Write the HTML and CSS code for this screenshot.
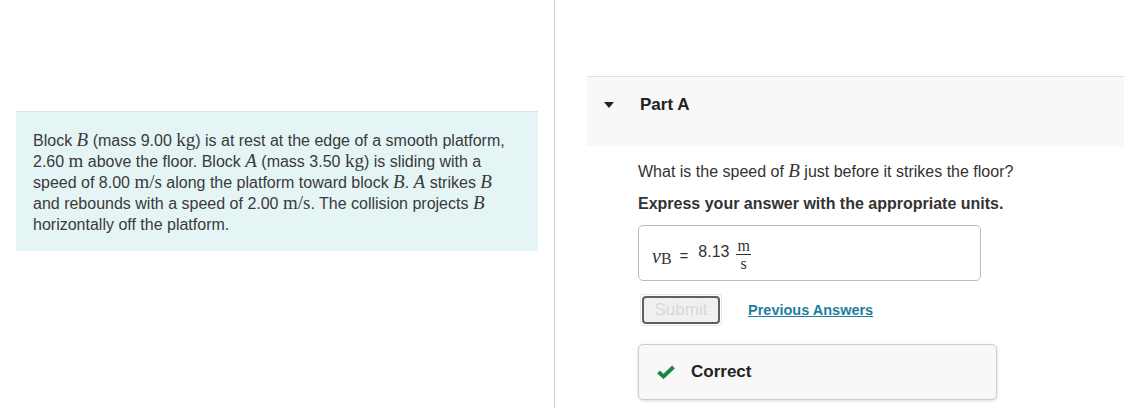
FILE: index.html
```html
<!DOCTYPE html>
<html lang="en">
<head>
  <meta charset="UTF-8">
  <meta name="viewport" content="width=device-width, initial-scale=1.0">
  <title>Part A</title>
  <link rel="stylesheet" href="styles.css">
</head>
<body>

  <div class="layout">
    <!-- Problem statement -->
    <div class="left-pane">
      <div class="problem-box">
        Block <span class="mi">B</span> (mass 9.00 <span class="mu">kg</span>) is at rest at the edge of a smooth platform,
        2.60 <span class="mu">m</span> above the floor. Block <span class="mi">A</span> (mass 3.50 <span class="mu">kg</span>) is sliding with a
        speed of 8.00 <span class="mu">m/s</span> along the platform toward block <span class="mi">B</span>. <span class="mi">A</span> strikes <span class="mi">B</span>
        and rebounds with a speed of 2.00 <span class="mu">m/s</span>. The collision projects <span class="mi">B</span>
        horizontally off the platform.
      </div>
    </div>

    <!-- Part A -->
    <div class="right-pane">
      <div class="part-header">
        <span class="caret"></span>
        <span class="part-title">Part A</span>
      </div>

      <div class="part-body">
        <p class="question">What is the speed of <span class="mi">B</span> just before it strikes the floor?</p>
        <p class="instructions">Express your answer with the appropriate units.</p>

        <div class="answer-box">
          <span class="mi v">v</span><span class="sub">B</span>
          <span class="eq">=</span>
          <span class="value">8.13</span>
          <span class="frac">
            <span class="num">m</span>
            <span class="den">s</span>
          </span>
        </div>

        <div class="actions">
          <span class="submit-wrap"><button class="submit-btn" disabled>Submit</button></span>
          <a href="#" class="prev-link">Previous Answers</a>
        </div>

        <div class="feedback">
          <svg class="check" width="18" height="14" viewBox="0 0 18 14">
            <path d="M1.5 7 L6.5 11.5 L16.5 2" fill="none" stroke="#138a3e" stroke-width="3.8"/>
          </svg>
          <span class="feedback-text">Correct</span>
        </div>
      </div>
    </div>
  </div>

</body>
</html>
```

FILE: styles.css
```css
* {
  margin: 0;
  padding: 0;
  box-sizing: border-box;
}

body {
  font-family: 'Liberation Sans', Arial, sans-serif;
  color: #333;
  background: #fff;
  width: 1124px;
  height: 408px;
  overflow: hidden;
}

.layout {
  display: flex;
  height: 408px;
}

/* Left column */
.left-pane {
  width: 555px;
  flex-shrink: 0;
  border-right: 1px solid #b9d0e0;
  padding: 111px 16px 0 16px;
}

.problem-box {
  background: #e5f5f6;
  border-top: 1px solid #d6e6ea;
  padding: 18px 17px 16px 17px;
  font-size: 16px;
  line-height: 21px;
  color: #3a3a3a;
}

.mi {
  font-family: 'Liberation Serif', 'Times New Roman', serif;
  font-style: italic;
  font-size: 19px;
  line-height: 1;
}

.mu {
  font-family: 'Liberation Serif', 'Times New Roman', serif;
  font-size: 19px;
  line-height: 1;
}

/* Right column */
.right-pane {
  flex: 1;
  padding-top: 76px;
}

.part-header {
  margin-left: 32px;
  height: 70px;
  background: #f8f8f8;
  border-top: 1px solid #e0e0e0;
  display: flex;
  align-items: center;
  padding-left: 17px;
  padding-bottom: 14px;
}

.caret {
  width: 0;
  height: 0;
  border-left: 5px solid transparent;
  border-right: 5px solid transparent;
  border-top: 6px solid #222;
  margin-right: 26px;
}

.part-title {
  font-weight: 700;
  font-size: 17px;
  color: #222;
}

.part-body {
  padding-left: 83px;
  padding-top: 15px;
}

.question {
  font-size: 16px;
  line-height: 20px;
  color: #333;
}

.instructions {
  font-size: 16px;
  font-weight: 700;
  margin-top: 13px;
  color: #333;
}

.answer-box {
  margin-top: 12px;
  width: 343px;
  height: 56px;
  border: 1px solid #bbb;
  border-radius: 5px;
  display: flex;
  align-items: center;
  padding-left: 13px;
  font-size: 16px;
  color: #333;
}

.answer-box .v {
  font-size: 20px;
  position: relative;
  top: 3px;
}

.answer-box .sub {
  font-family: 'Liberation Serif', 'Times New Roman', serif;
  font-size: 16px;
  position: relative;
  top: 6px;
}

.answer-box .eq {
  margin: 4px 10px 0 8px;
  font-size: 15px;
}

.answer-box .value {
  margin-top: -2px;
}

.frac {
  display: inline-flex;
  flex-direction: column;
  align-items: center;
  margin-left: 7px;
  margin-top: 2px;
  font-family: 'Liberation Serif', 'Times New Roman', serif;
  font-size: 16px;
  line-height: 15px;
}

.frac .num {
  border-bottom: 1px solid #333;
  padding: 0 1px 1px;
}

.frac .den {
  padding-top: 1px;
}

/* Submit row */
.actions {
  display: flex;
  align-items: center;
  margin-top: 13px;
  padding-left: 2px;
}

.submit-wrap {
  border: 1px solid #e8e8e8;
  border-radius: 2px;
  padding: 1px;
}

.submit-btn {
  font-family: 'Liberation Sans', Arial, sans-serif;
  font-size: 17px;
  color: #d8d8d8;
  background: #f0f0f0;
  border: 2px solid #606060;
  border-radius: 4px;
  width: 78px;
  height: 28px;
}

.prev-link {
  margin-left: 26px;
  font-size: 14.5px;
  font-weight: 700;
  color: #1e7ea0;
  text-decoration: underline;
}

/* Feedback */
.feedback {
  margin-top: 18px;
  width: 359px;
  height: 56px;
  background: #f8f8f8;
  border: 1px solid #ccc;
  border-radius: 5px;
  box-shadow: 0 1px 3px rgba(0, 0, 0, 0.15);
  display: flex;
  align-items: center;
  padding-left: 18px;
}

.check {
  margin-right: 16px;
}

.feedback-text {
  font-size: 17px;
  font-weight: 700;
  color: #222;
}
```
